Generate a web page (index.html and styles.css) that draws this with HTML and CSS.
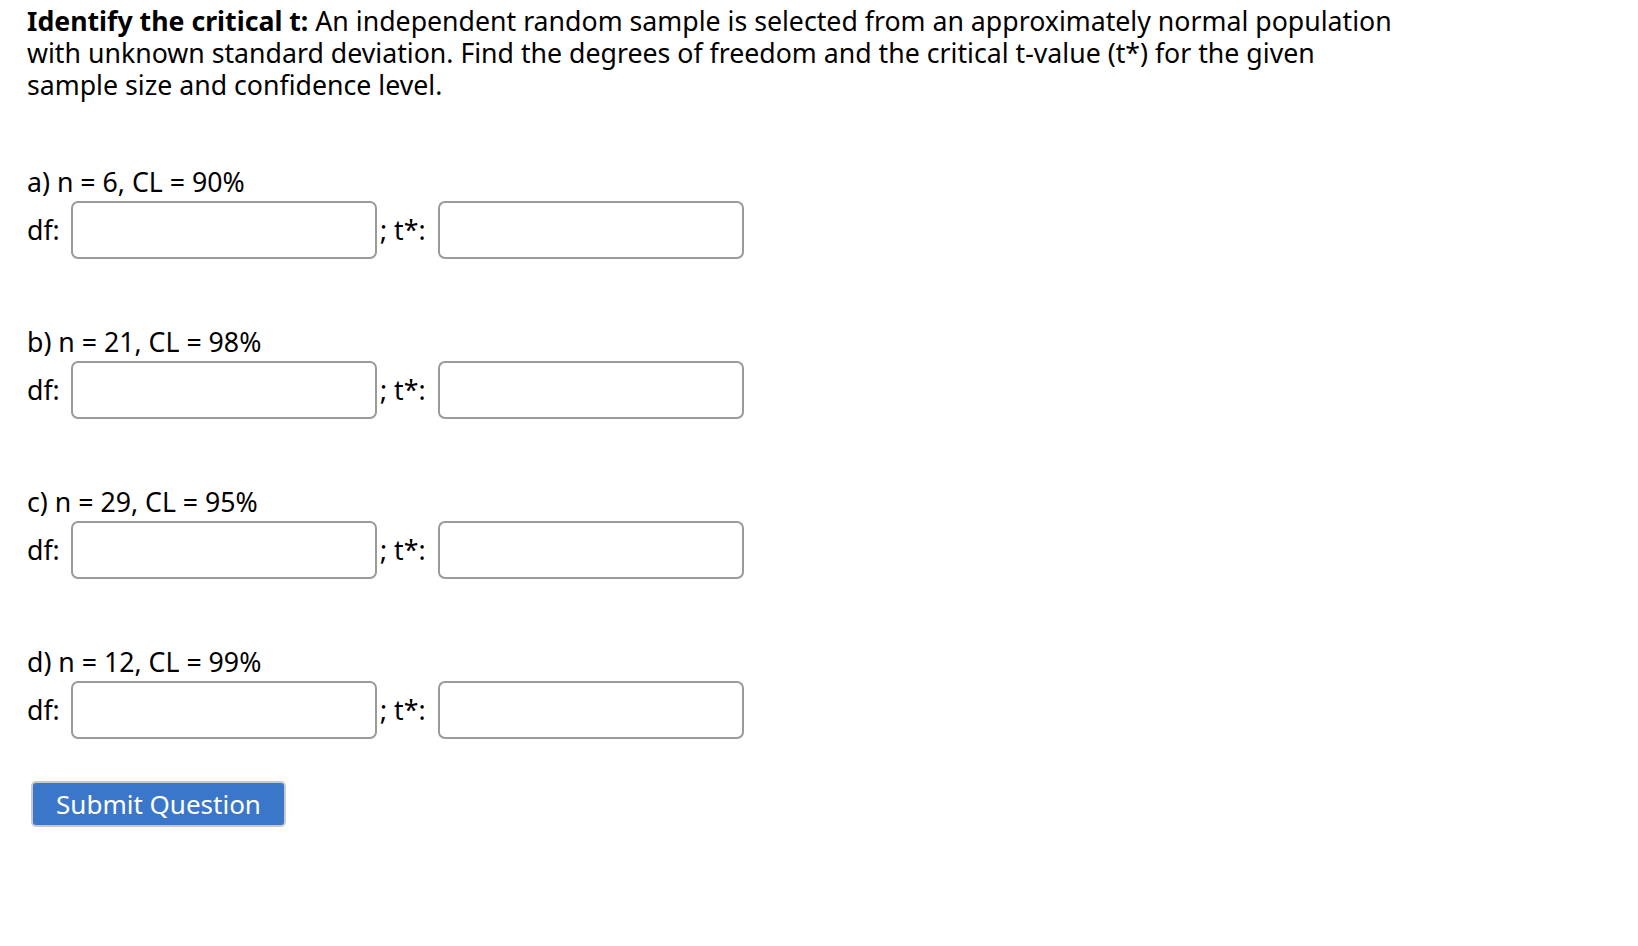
FILE: index.html
```html
<!DOCTYPE html>
<html lang="en">
<head>
<meta charset="utf-8">
<title>Identify the critical t</title>
<link rel="stylesheet" href="styles.css">
</head>
<body>
<div class="question">
  <p class="prompt"><b>Identify the critical t:</b> An independent random sample is selected from an approximately normal population with unknown standard deviation. Find the degrees of freedom and the critical t-value (t*) for the given sample size and confidence level.</p>

  <div class="part">
    <div class="label">a) n = 6, CL = 90%</div>
    <div class="row"><span class="df">df:</span><input class="answer" type="text"><span class="tstar">; t*:</span><input class="answer" type="text"></div>
  </div>

  <div class="part">
    <div class="label">b) n = 21, CL = 98%</div>
    <div class="row"><span class="df">df:</span><input class="answer" type="text"><span class="tstar">; t*:</span><input class="answer" type="text"></div>
  </div>

  <div class="part">
    <div class="label">c) n = 29, CL = 95%</div>
    <div class="row"><span class="df">df:</span><input class="answer" type="text"><span class="tstar">; t*:</span><input class="answer" type="text"></div>
  </div>

  <div class="part">
    <div class="label">d) n = 12, CL = 99%</div>
    <div class="row"><span class="df">df:</span><input class="answer" type="text"><span class="tstar">; t*:</span><input class="answer" type="text"></div>
  </div>

  <button class="submit" type="button">Submit Question</button>
</div>
</body>
</html>
```
FILE: styles.css
```css
html, body {
  margin: 0;
  padding: 0;
  background: #fff;
}
body {
  font-family: "Noto Sans", "DejaVu Sans", sans-serif;
  font-size: 26.7px;
  line-height: 32px;
  color: #000;
}
.question {
  padding: 5px 0 0 27px;
  width: 1380px;
}
.prompt {
  margin: 0 0 65px 0;
}
.prompt b {
  font-weight: 700;
}
.part {
  margin-bottom: 67px;
}
.part:last-of-type {
  margin-bottom: 42px;
}
.label {
  height: 32px;
}
.row {
  margin-top: 3px;
  height: 58px;
  display: flex;
  align-items: center;
  white-space: pre;
}
.df {
  width: 44px;
}
.tstar {
  width: 61px;
  padding-left: 3px;
  box-sizing: border-box;
}
.answer {
  box-sizing: border-box;
  width: 306px;
  height: 58px;
  margin: 0;
  padding: 0 10px;
  border: 2px solid #9a9a9a;
  border-radius: 7px;
  background: #fff;
  font: inherit;
  outline: none;
}
.submit {
  display: block;
  box-sizing: border-box;
  margin-left: 4px;
  width: 255px;
  height: 46px;
  padding: 0;
  background: #3a76c9;
  color: #fff;
  border: 2px solid #c9c9c9;
  border-radius: 5px;
  font-family: "Noto Sans", "DejaVu Sans", sans-serif;
  font-size: 26px;
  line-height: 40px;
  cursor: pointer;
}
```
